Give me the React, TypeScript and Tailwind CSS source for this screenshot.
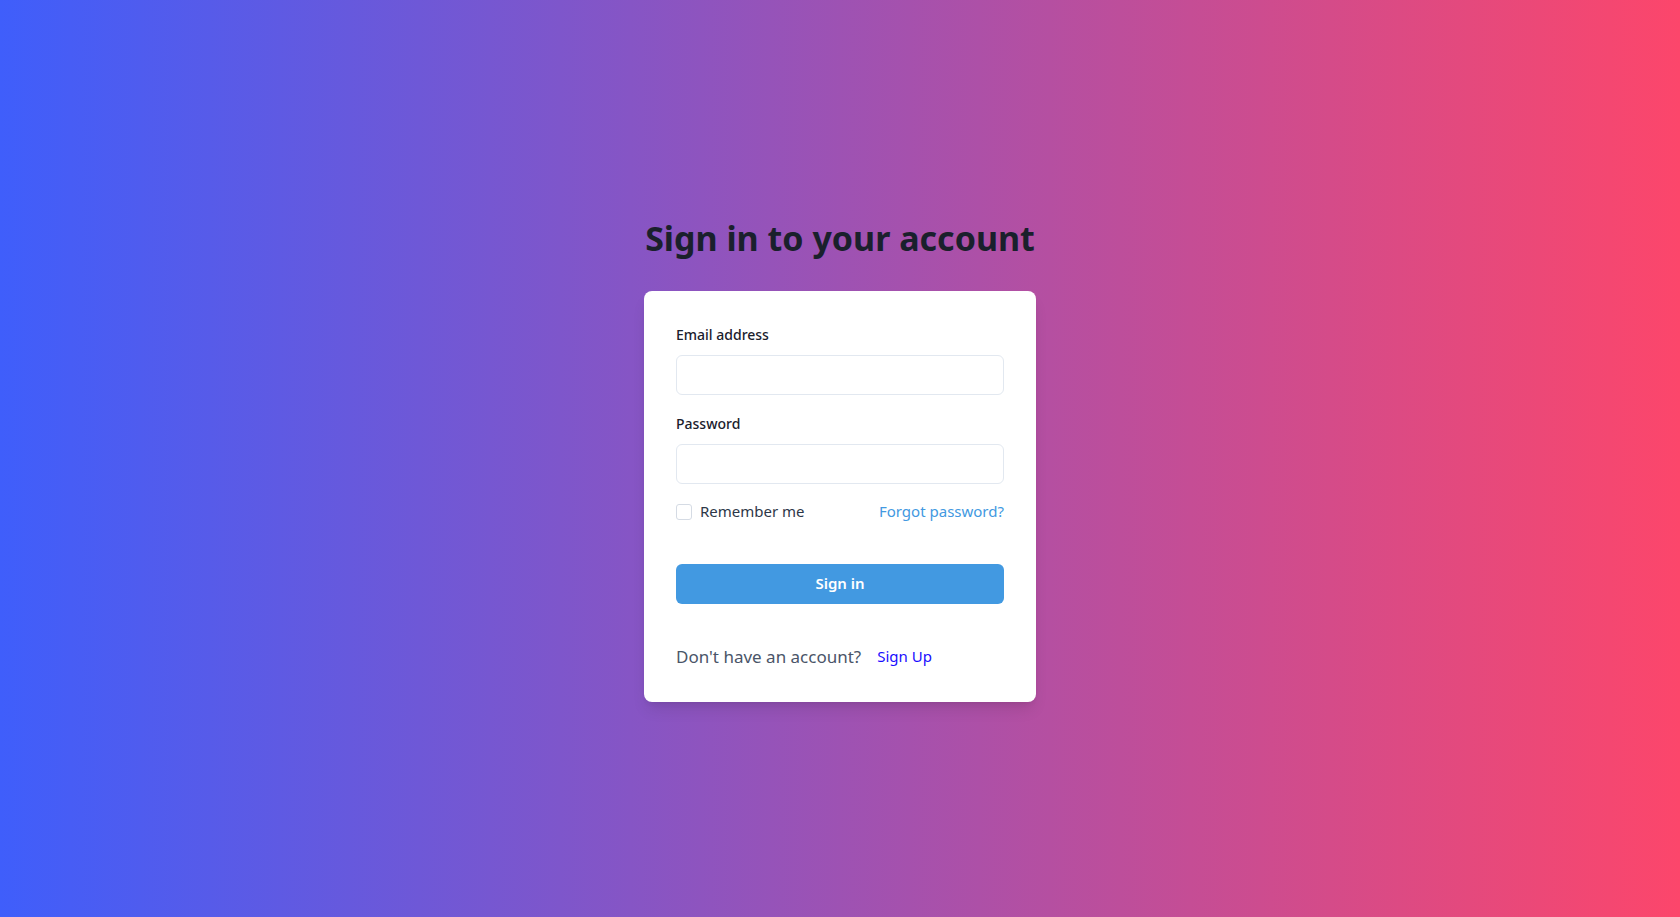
import React from "react";

export default function App() {
  return (
    <div
      className="min-h-screen w-full flex flex-col items-center justify-center pt-[2px] bg-[linear-gradient(90deg,#3f5efb,#fc466b)]"
      style={{ fontFamily: '"Noto Sans", "Open Sans", sans-serif' }}
    >
      <div className="w-[392px] flex flex-col">
        <h1 className="text-center text-[34px] leading-[40px] font-bold text-[#1a202c] mb-[33px] whitespace-nowrap">
          Sign in to your account
        </h1>
        <div className="bg-white rounded-lg shadow-lg px-8 pt-[34px] pb-[33px]">
          <label className="block text-[14px] leading-5 font-medium text-[#1a202c]">Email address</label>
          <input
            type="email"
            className="mt-[10px] block w-full h-[40px] rounded-md border border-[#e2e8f0] bg-white outline-none"
          />
          <label className="mt-[19px] block text-[14px] leading-5 font-medium text-[#1a202c]">Password</label>
          <input
            type="password"
            className="mt-[10px] block w-full h-[40px] rounded-md border border-[#e2e8f0] bg-white outline-none"
          />
          <div className="mt-[16px] flex items-center justify-between h-6">
            <label className="flex items-center text-[15px] text-[#2d3748]">
              <span className="w-4 h-4 border border-[#d5dbe4] rounded-[3px] bg-white mr-2 inline-block"></span>
              Remember me
            </label>
            <a className="text-[15px] text-[#4299e1]">Forgot password?</a>
          </div>
          <button className="mt-[40px] w-full h-[40px] rounded-md bg-[#4299e1] text-white text-[15px] font-semibold">
            Sign in
          </button>
          <div className="mt-[41px] flex items-center h-6">
            <span className="text-[17px] text-[#4a5568]">Don't have an account?</span>
            <a className="ml-[16px] text-[15px] text-[#1a0dff]">Sign Up</a>
          </div>
        </div>
      </div>
    </div>
  );
}
